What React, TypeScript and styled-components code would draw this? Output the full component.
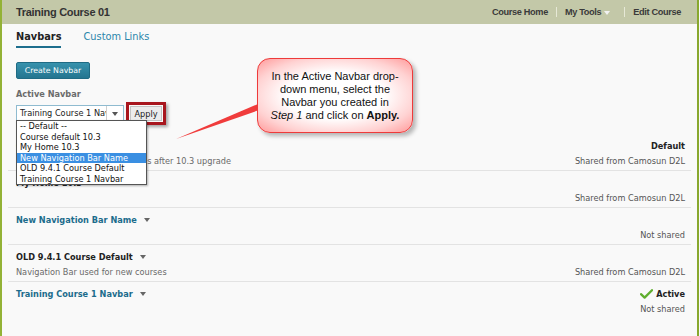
import React from "react";
import styled, { createGlobalStyle } from "styled-components";

const Global = createGlobalStyle`
  html, body { margin: 0; padding: 0; background: #f9f9f9; }
  body { font-family: "DejaVu Sans", Verdana, sans-serif; }
  * { box-sizing: border-box; }
`;

const Frame = styled.div`
  position: relative;
  width: 699px;
  height: 336px;
  border-left: 2px solid #93b236;
  border-right: 2px solid #88a82e;
  background: #f9f9f9;
  overflow: hidden;
`;

const Header = styled.header`
  height: 24px;
  background: #c3c8a8;
  display: flex;
  align-items: center;
  justify-content: space-between;
  padding: 0 16px 0 14px;
`;

const CourseTitle = styled.div`
  font-family: "Liberation Sans", Arial, sans-serif;
  font-weight: bold;
  font-size: 11px;
  letter-spacing: -0.3px;
  color: #333;
`;

const Nav = styled.nav`
  display: flex;
  align-items: center;
`;

const NavItem = styled.span`
  display: flex;
  align-items: center;
  padding: 0 8px;
  line-height: 10px;
  font-family: "Liberation Sans", Arial, sans-serif;
  font-weight: bold;
  font-size: 9.2px;
  letter-spacing: -0.35px;
  color: #3a3a3a;
  & + & { border-left: 1px solid #e6e8d6; }
  &:last-child { padding-right: 0; }
`;

const NavCaret = styled.span`
  width: 0;
  height: 0;
  margin: 1px 6px 0 3px;
  border-left: 3px solid transparent;
  border-right: 3px solid transparent;
  border-top: 4px solid #f2f2f2;
`;

const Main = styled.main`
  padding: 0 12px 0 14px;
`;

const TabBar = styled.div`
  display: flex;
  gap: 22px;
  height: 24px;
`;

const Tab = styled.span<{ $active?: boolean }>`
  padding: 6px 0 3px;
  line-height: 13px;
  font-size: 9.8px;
  font-weight: ${(p) => (p.$active ? "bold" : "normal")};
  color: ${(p) => (p.$active ? "#222" : "#2b86ab")};
  border-bottom: 2px solid ${(p) => (p.$active ? "#1d6e8d" : "transparent")};
`;

const Toolbar = styled.div`
  margin-top: 14px;
  display: flex;
`;

const CreateButton = styled.button`
  height: 17px;
  width: 74px;
  padding: 0;
  font-family: "DejaVu Sans", Verdana, sans-serif;
  font-size: 7.8px;
  color: #fff;
  background: linear-gradient(#3792ad, #247590);
  border: 1px solid #1f6b84;
  border-radius: 2px;
`;

const FieldLabel = styled.div`
  margin-top: 9px;
  line-height: 13px;
  font-size: 8.2px;
  font-weight: bold;
  color: #6b6b6b;
`;

const SelectRow = styled.div`
  margin-top: 1px;
  display: flex;
  align-items: center;
  gap: 2px;
`;

const FakeSelect = styled.div`
  width: 108px;
  height: 17px;
  display: flex;
  border: 1px solid #8fbbd0;
  background: #fff;
`;

const SelectText = styled.span`
  flex: 1;
  overflow: hidden;
  white-space: nowrap;
  padding-left: 3px;
  font-size: 8.2px;
  line-height: 15px;
  color: #222;
`;

const SelectArrowBox = styled.span`
  width: 17px;
  display: flex;
  align-items: center;
  justify-content: center;
  border-left: 1px solid #cfcfcf;
`;

const Triangle = styled.span<{ $color?: string }>`
  width: 0;
  height: 0;
  border-left: 3px solid transparent;
  border-right: 3px solid transparent;
  border-top: 4px solid ${(p) => p.$color || "#666"};
`;

const Highlight = styled.span`
  display: flex;
  padding: 1px;
  border: 3px solid #a8161e;
  box-shadow: 2px 2px 3px rgba(0, 0, 0, 0.35);
`;

const ApplyButton = styled.button`
  width: 32px;
  height: 15px;
  padding: 0;
  font-family: "DejaVu Sans", Verdana, sans-serif;
  font-size: 8.2px;
  color: #222;
  background: #ececec;
  border: 1px solid #c4c4c4;
`;

const RowList = styled.div`
  margin: 9px -6px 0 -8px;
`;

const Row = styled.div<{ $last?: boolean }>`
  display: grid;
  grid-template-columns: 1fr auto;
  grid-template-rows: 14px 15px;
  align-items: center;
  padding: 5px 6px 2px 8px;
  border-bottom: 1px solid ${(p) => (p.$last ? "transparent" : "#e3e3e3")};
`;

const RowTitle = styled.div<{ $link?: boolean }>`
  display: flex;
  align-items: center;
  gap: 7px;
  font-size: 8.2px;
  font-weight: bold;
  color: ${(p) => (p.$link ? "#1c6c8c" : "#222")};
`;

const RowDesc = styled.div`
  font-size: 8.2px;
  color: #6a6a6a;
  white-space: nowrap;
`;

const Status = styled.div`
  display: flex;
  align-items: center;
  justify-content: flex-end;
  gap: 3px;
  font-size: 8.2px;
  font-weight: bold;
  color: #222;
`;

const Share = styled.div`
  text-align: right;
  font-size: 8.2px;
  color: #555;
`;

const DropList = styled.ul`
  position: absolute;
  left: 14px;
  top: 120px;
  width: 131px;
  margin: 0;
  padding: 0;
  list-style: none;
  background: #fff;
  border: 1px solid #555;
  box-shadow: 1px 1px 2px rgba(0, 0, 0, 0.3);
`;

const DropItem = styled.li<{ $selected?: boolean }>`
  height: 10.5px;
  line-height: 10.5px;
  padding-left: 3px;
  font-size: 8.2px;
  white-space: nowrap;
  color: ${(p) => (p.$selected ? "#fff" : "#111")};
  background: ${(p) => (p.$selected ? "#3a8fe2" : "transparent")};
`;

const Pointer = styled.svg`
  position: absolute;
  left: 168px;
  top: 95px;
  width: 100px;
  height: 50px;
`;

const Callout = styled.div`
  position: absolute;
  left: 255px;
  top: 58px;
  width: 156px;
  height: 75px;
  display: flex;
  flex-direction: column;
  justify-content: center;
  align-items: center;
  border: 1.5px solid #ee3a3a;
  border-radius: 13px;
  background: radial-gradient(ellipse at center, #ffffff 45%, #ffd2d2 75%, #ff9a9a 100%);
  box-shadow: 3px 3px 4px rgba(0, 0, 0, 0.28);
  font-family: "Liberation Sans", Arial, sans-serif;
  font-size: 11px;
  line-height: 13px;
  color: #111;
  text-align: center;
`;

const CheckIcon = () => (
  <svg width="13" height="10" viewBox="0 0 13 10">
    <path d="M1 5.2 L4.6 8.6 L12 1.2" fill="none" stroke="#5fae2e" strokeWidth="2.3" strokeLinecap="round" strokeLinejoin="round" />
  </svg>
);

type NavRow = {
  title: string;
  link?: boolean;
  desc?: string;
  status?: React.ReactNode;
  share: string;
};

const rows: NavRow[] = [
  { title: "Course default 10.3", desc: "Navigation Bars used for courses after 10.3 upgrade", status: "Default", share: "Shared from Camosun D2L" },
  { title: "My Home 10.3", share: "Shared from Camosun D2L" },
  { title: "New Navigation Bar Name", link: true, share: "Not shared" },
  { title: "OLD 9.4.1 Course Default", desc: "Navigation Bar used for new courses", share: "Shared from Camosun D2L" },
  {
    title: "Training Course 1 Navbar",
    link: true,
    status: (
      <>
        <CheckIcon />
        Active
      </>
    ),
    share: "Not shared",
  },
];

const options = [
  "-- Default --",
  "Course default 10.3",
  "My Home 10.3",
  "New Navigation Bar Name",
  "OLD 9.4.1 Course Default",
  "Training Course 1 Navbar",
];

export default function App() {
  return (
    <>
      <Global />
      <Frame>
        <Header>
          <CourseTitle>Training Course 01</CourseTitle>
          <Nav>
            <NavItem>Course Home</NavItem>
            <NavItem>
              My Tools
              <NavCaret />
            </NavItem>
            <NavItem>Edit Course</NavItem>
          </Nav>
        </Header>
        <Main>
          <TabBar>
            <Tab $active>Navbars</Tab>
            <Tab>Custom Links</Tab>
          </TabBar>
          <Toolbar>
            <CreateButton>Create Navbar</CreateButton>
          </Toolbar>
          <FieldLabel>Active Navbar</FieldLabel>
          <SelectRow>
            <FakeSelect>
              <SelectText>Training Course 1 Navbar</SelectText>
              <SelectArrowBox>
                <Triangle $color="#555" />
              </SelectArrowBox>
            </FakeSelect>
            <Highlight>
              <ApplyButton>Apply</ApplyButton>
            </Highlight>
          </SelectRow>
          <RowList>
            {rows.map((r, i) => (
              <Row key={r.title} $last={i === rows.length - 1}>
                <RowTitle $link={r.link}>
                  {r.title}
                  <Triangle $color="#666" />
                </RowTitle>
                <Status>{r.status}</Status>
                <RowDesc>{r.desc}</RowDesc>
                <Share>{r.share}</Share>
              </Row>
            ))}
          </RowList>
        </Main>
        <DropList>
          {options.map((o) => (
            <DropItem key={o} $selected={o === "New Navigation Bar Name"}>
              {o}
            </DropItem>
          ))}
        </DropList>
        <Pointer viewBox="0 0 100 50">
          <polygon points="95,6 95,13 6,44" fill="#f03c3c" />
        </Pointer>
        <Callout>
          <span>In the Active Navbar drop-</span>
          <span>down menu, select the</span>
          <span>Navbar you created in</span>
          <span>
            <i>Step 1</i> and click on <b>Apply.</b>
          </span>
        </Callout>
      </Frame>
    </>
  );
}
